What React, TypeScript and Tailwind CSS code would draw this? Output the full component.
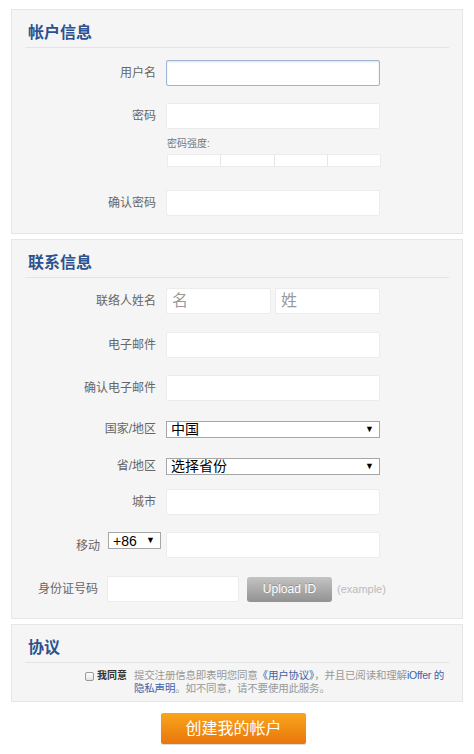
import React from "react";

const font = { fontFamily: '"Liberation Sans", "Noto Sans CJK SC", sans-serif' };

function Panel({ title, children, className = "" }: { title: string; children: React.ReactNode; className?: string }) {
  return (
    <section className={`ml-[11px] w-[452px] border border-[#e6e6e6] bg-[#f5f5f5] ${className}`}>
      <div className="mx-[13px] border-b border-[#e4e4e4] pb-[4px] pl-[3px] pt-[13px]">
        <h2 className="text-[16px] font-bold leading-[20px] text-[#2d5190]">{title}</h2>
      </div>
      {children}
    </section>
  );
}

function Row({ label, children, className = "" }: { label: string; children: React.ReactNode; className?: string }) {
  return (
    <div className={`flex items-center ${className}`}>
      <label className="w-[145px] pr-px text-right text-[12px] text-[#666]">{label}</label>
      <div className="ml-[9px] flex">{children}</div>
    </div>
  );
}

function TextBox({ className = "w-[214px]", placeholder }: { className?: string; placeholder?: string }) {
  return (
    <div
      className={`flex h-[26px] items-center rounded-[2px] border border-[#ececec] bg-white pl-[5px] text-[16px] text-[#999] ${className}`}
    >
      {placeholder}
    </div>
  );
}

function Select({ value, className = "w-[214px]" }: { value: string; className?: string }) {
  return (
    <div
      className={`flex h-[17px] items-center justify-between border border-[#a6a6a6] bg-white pl-[4px] pr-[5px] text-[14px] leading-none text-black ${className}`}
    >
      <span>{value}</span>
      <span className="text-[9px]">▼</span>
    </div>
  );
}

export default function App() {
  return (
    <div className="min-h-[754px] w-[474px] bg-white pt-[9px]" style={font}>
      <Panel title="帐户信息">
        <Row label="用户名" className="mt-[12px]">
          <div className="h-[26px] w-[214px] rounded-[2px] border border-[#9db4d4] bg-white shadow-[inset_0_1px_2px_rgba(0,0,0,0.12)]" />
        </Row>
        <Row label="密码" className="mt-[17px]">
          <TextBox />
        </Row>
        <div className="ml-[155px] mt-[9px] w-[214px]">
          <div className="text-[10px] leading-[12px] text-[#777]">密码强度:</div>
          <div className="mt-[4px] flex h-[13px] border border-[#ececec] bg-white">
            <div className="flex-1 border-r border-[#e6e6e6]" />
            <div className="flex-1 border-r border-[#e6e6e6]" />
            <div className="flex-1 border-r border-[#e6e6e6]" />
            <div className="flex-1" />
          </div>
        </div>
        <Row label="确认密码" className="mb-[17px] mt-[23px]">
          <TextBox />
        </Row>
      </Panel>

      <Panel title="联系信息" className="mt-[5px]">
        <Row label="联络人姓名" className="mt-[10px]">
          <TextBox className="w-[105px]" placeholder="名" />
          <TextBox className="ml-[4px] w-[105px]" placeholder="姓" />
        </Row>
        <Row label="电子邮件" className="mt-[18px]">
          <TextBox />
        </Row>
        <Row label="确认电子邮件" className="mt-[17px]">
          <TextBox />
        </Row>
        <Row label="国家/地区" className="mt-[19px]">
          <Select value="中国" />
        </Row>
        <Row label="省/地区" className="mt-[19px]">
          <Select value="选择省份" />
        </Row>
        <Row label="城市" className="mt-[14px]">
          <TextBox />
        </Row>
        <div className="mt-[17px] flex items-start">
          <label className="mt-[5px] w-[88px] text-right text-[12px] text-[#666]">移动</label>
          <Select value="+86" className="ml-[8px] h-[17px] w-[53px]" />
          <TextBox className="ml-[5px] w-[214px]" />
        </div>
        <div className="mb-[16px] mt-[18px] flex items-center">
          <label className="w-[86px] text-right text-[12px] text-[#666]">身份证号码</label>
          <TextBox className="ml-[9px] w-[132px]" />
          <button className="ml-[8px] h-[25px] w-[85px] rounded-[3px] bg-gradient-to-b from-[#c4c4c4] to-[#929292] text-[12px] text-white [text-shadow:0_-1px_0_rgba(0,0,0,0.2)]">
            Upload ID
          </button>
          <span className="ml-[5px] text-[11px] text-[#bbb]">(example)</span>
        </div>
      </Panel>

      <Panel title="协议" className="mt-[5px]">
        <div className="mb-[6px] mt-[6px] flex items-start">
          <div className="ml-[73px] mt-[3px] h-[9px] w-[9px] shrink-0 rounded-[2px] border border-[#999] bg-gradient-to-b from-white to-[#e4e4e4]" />
          <span className="ml-[3px] shrink-0 whitespace-nowrap text-[10px] font-bold leading-[13px] text-[#333]">我同意</span>
          <p className="ml-[7px] whitespace-nowrap text-[10.5px] leading-[13px] tracking-[-0.2px] text-[#999]">
            提交注册信息即表明您同意<span className="text-[#3b63a8]">《用户协议》</span>，并且已阅读和理解
            <span className="text-[#3b63a8]">iOffer 的</span>
            <br />
            <span className="text-[#3b63a8]">隐私声明</span>。如不同意，请不要使用此服务。
          </p>
        </div>
      </Panel>

      <button className="ml-[161px] mt-[11px] h-[31px] w-[145px] rounded-[2px] bg-gradient-to-b from-[#f8a61c] to-[#e9750b] text-[16px] text-white shadow-[0_1px_1px_rgba(0,0,0,0.15)]">
        创建我的帐户
      </button>
    </div>
  );
}
